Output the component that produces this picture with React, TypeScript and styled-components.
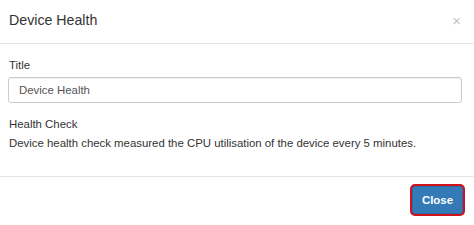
import React, { useState } from 'react';
import styled, { createGlobalStyle } from 'styled-components';

const GlobalStyle = createGlobalStyle`
  html, body {
    margin: 0;
    padding: 0;
    background: #fff;
    font-family: "Liberation Sans", Arial, sans-serif;
    color: #333;
  }
`;

const Modal = styled.div`
  width: 474px;
  height: 225px;
  background: #fff;
  display: flex;
  flex-direction: column;
`;

const Header = styled.div`
  display: flex;
  align-items: center;
  justify-content: space-between;
  height: 44px;
  box-sizing: border-box;
  padding: 0 13px 2px 9px;
  border-bottom: 1px solid #e5e5e5;
`;

const Title = styled.h4`
  margin: 0;
  font-size: 14.2px;
  font-weight: normal;
  line-height: 19px;
  color: #333;
`;

const Dismiss = styled.button`
  border: none;
  background: none;
  padding: 0;
  font-size: 15px;
  line-height: 15px;
  color: #c4c4c4;
  cursor: pointer;
  font-family: "Liberation Sans", Arial, sans-serif;
`;

const Body = styled.div`
  display: flex;
  flex-direction: column;
  padding: 13px 12px 25px 8px;
  border-bottom: 1px solid #e5e5e5;
`;

const Label = styled.label<{ $gap?: number }>`
  font-size: 11.4px;
  line-height: 16px;
  padding-left: 1px;
  margin-top: ${(p) => p.$gap ?? 0}px;
  margin-bottom: 4px;
`;

const Input = styled.input`
  height: 26px;
  box-sizing: border-box;
  border: 1px solid #ccc;
  border-radius: 3px;
  padding: 0 10px;
  font-family: "Liberation Sans", Arial, sans-serif;
  font-size: 11.4px;
  color: #555;
  box-shadow: inset 0 1px 1px rgba(0, 0, 0, 0.06);
  outline: none;
`;

const Text = styled.p`
  margin: 0;
  padding-left: 1px;
  font-size: 11.4px;
  line-height: 16px;
  margin-top: -1px;
`;

const Footer = styled.div`
  display: flex;
  justify-content: flex-end;
  padding: 9px 11px 0 0;
`;

const Button = styled.button`
  height: 28px;
  padding: 0 9px;
  box-sizing: border-box;
  border: 1px solid #2e6da4;
  border-radius: 3px;
  background: #337ab7;
  color: #fff;
  font-family: "Liberation Sans", Arial, sans-serif;
  font-size: 11.4px;
  font-weight: bold;
  cursor: pointer;
  box-shadow: 0 0 0 2px #d0101e;
`;

const App: React.FC = () => {
  const [title, setTitle] = useState('Device Health');

  return (
    <>
      <GlobalStyle />
      <Modal>
        <Header>
          <Title>Device Health</Title>
          <Dismiss aria-label="Close">×</Dismiss>
        </Header>
        <Body>
          <Label htmlFor="title">Title</Label>
          <Input id="title" value={title} onChange={(e) => setTitle(e.target.value)} />
          <Label $gap={13}>Health Check</Label>
          <Text>Device health check measured the CPU utilisation of the device every 5 minutes.</Text>
        </Body>
        <Footer>
          <Button>Close</Button>
        </Footer>
      </Modal>
    </>
  );
};

export default App;
